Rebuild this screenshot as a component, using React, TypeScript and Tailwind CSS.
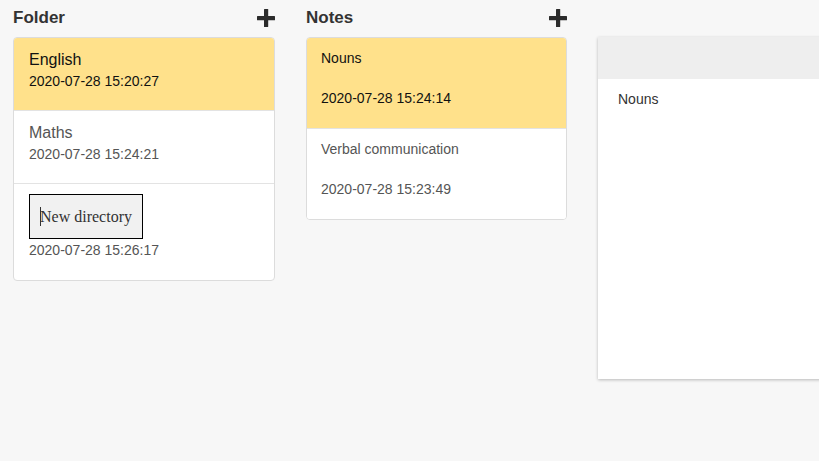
import React from "react";

const font = { fontFamily: '"Liberation Sans", Arial, sans-serif' };

function PlusIcon() {
  return (
    <svg width="18" height="18" viewBox="0 0 18 18" className="text-[#2b2b2b]">
      <rect x="7" y="0" width="4.2" height="18" rx="0.5" fill="currentColor" />
      <rect x="0" y="7" width="18" height="4.2" rx="0.5" fill="currentColor" />
    </svg>
  );
}

function ColumnHeader({ title }: { title: string }) {
  return (
    <div className="flex h-[37px] items-center justify-between pb-[1px]">
      <span className="text-[17px] font-semibold text-[#333]">{title}</span>
      <PlusIcon />
    </div>
  );
}

const folders = [
  { name: "English", date: "2020-07-28 15:20:27", active: true },
  { name: "Maths", date: "2020-07-28 15:24:21", active: false },
];

const notes = [
  { name: "Nouns", date: "2020-07-28 15:24:14", active: true },
  { name: "Verbal communication", date: "2020-07-28 15:23:49", active: false },
];

export default function App() {
  return (
    <div
      className="flex h-[461px] w-[819px] gap-[31px] overflow-hidden bg-[#f7f7f7] pl-[13px]"
      style={font}
    >
      <div className="w-[262px] shrink-0">
        <ColumnHeader title="Folder" />
        <div className="overflow-hidden rounded-[4px] border border-[#dcdcdc] bg-white">
          {folders.map((f) => (
            <div
              key={f.name}
              className={`h-[73px] border-b border-[#e3e3e3] px-[15px] pt-[12px] ${
                f.active ? "bg-[#ffe18b] text-[#111]" : "bg-white text-[#555]"
              }`}
            >
              <div className="text-[16px] leading-[20px]">{f.name}</div>
              <div className="mt-[1px] text-[14px] leading-[20px]">{f.date}</div>
            </div>
          ))}
          <div className="h-[96px] px-[15px] pt-[10px] text-[#555]">
            <div
              className="flex h-[45px] w-[114px] items-center border border-black bg-[#f1f1f1] pl-[10px] text-[16px] text-[#333]"
              style={{ fontFamily: '"Liberation Serif", "Times New Roman", serif' }}
            >
              <span className="mr-[-1px] inline-block h-[19px] w-[1px] bg-[#333]" />
              New directory
            </div>
            <div className="mt-[1px] text-[14px] leading-[20px]">2020-07-28 15:26:17</div>
          </div>
        </div>
      </div>

      <div className="w-[261px] shrink-0">
        <ColumnHeader title="Notes" />
        <div className="overflow-hidden rounded-[4px] border border-[#dcdcdc] bg-white">
          {notes.map((n, i) => (
            <div
              key={n.name}
              className={`px-[14px] pt-[10px] text-[14px] leading-[20px] ${
                i === 0 ? "h-[90px]" : "h-[91px] border-t border-[#e3e3e3]"
              } ${n.active ? "bg-[#ffe18b] text-[#111]" : "bg-white text-[#555]"}`}
            >
              <div>{n.name}</div>
              <div className="mt-[20px]">{n.date}</div>
            </div>
          ))}
        </div>
      </div>

      <div className="mt-[37px] h-[342px] w-[260px] shrink-0 bg-white shadow-[0_1px_3px_rgba(0,0,0,0.25)]">
        <div className="h-[42px] bg-[#eeeeee]" />
        <div className="px-[20px] pt-[10px] text-[14px] leading-[20px] text-[#333]">Nouns</div>
      </div>
    </div>
  );
}
